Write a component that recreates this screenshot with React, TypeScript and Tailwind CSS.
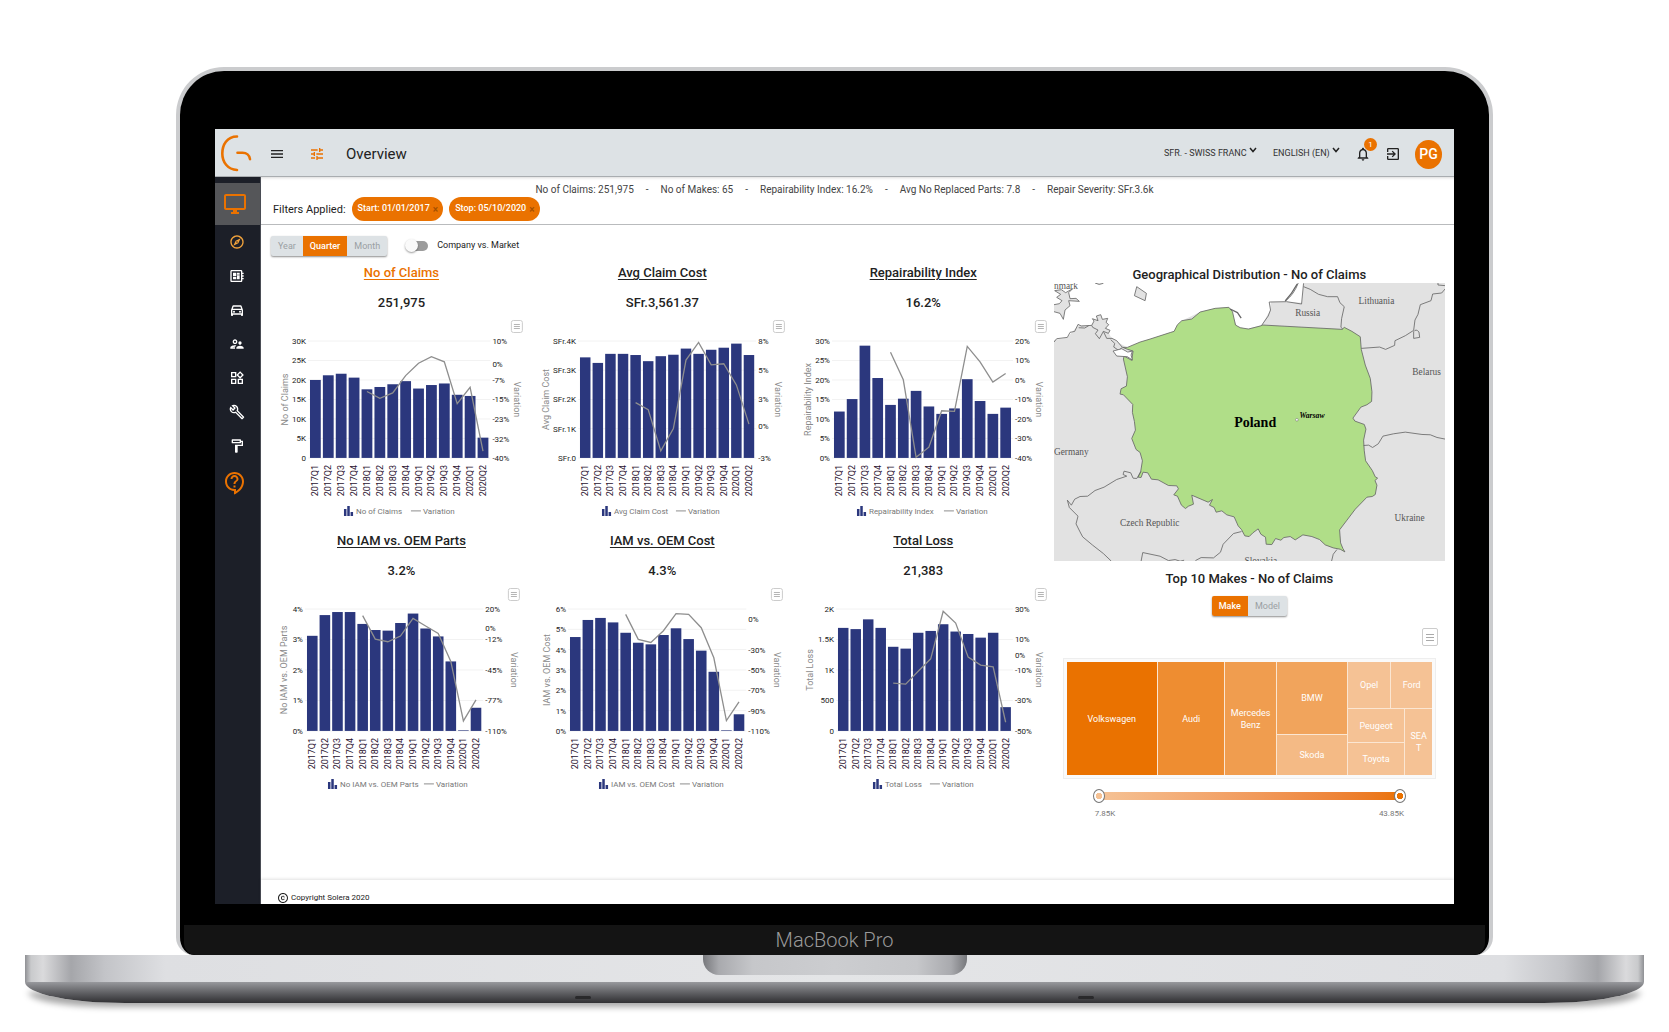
import { useState, type ReactNode } from "react";
import {
  MdCopyright,
  MdExitToApp,
  MdMenu,
  MdNotificationsNone,
  MdOutlineBuild,
  MdOutlineContactSupport,
  MdOutlineDesktopWindows,
  MdOutlineDeveloperBoard,
  MdOutlineDirectionsCar,
  MdOutlineExplore,
  MdOutlineFormatPaint,
  MdOutlineSupervisorAccount,
  MdOutlineWidgets,
  MdTune,
} from "react-icons/md";

type Tick = [label: string, value: number];

type Kpi = {
  title: string;
  value: string;
  active?: boolean;
  height: number;
  plotHeight: number;
  /** x of the first bar, distance between bars, bar width */
  start: number;
  pitch: number;
  barWidth: number;
  max: number;
  ticks: Tick[];
  bars: number[];
  range: [low: number, high: number];
  rightTicks: Tick[];
  variation: number[];
  axisX: [left: number, right: number];
  menuX: number;
  legendX: number;
  legendLineX: number;
};

const QUARTERS = [
  "2017Q1", "2017Q2", "2017Q3", "2017Q4",
  "2018Q1", "2018Q2", "2018Q3", "2018Q4",
  "2019Q1", "2019Q2", "2019Q3", "2019Q4",
  "2020Q1", "2020Q2",
];

const KPIS: Kpi[] = [
  {
    title: "No of Claims",
    value: "251,975",
    active: true,
    height: 209,
    plotHeight: 117,
    start: 39,
    pitch: 12.9,
    barWidth: 10.8,
    max: 30,
    ticks: [["30K", 30], ["25K", 25], ["20K", 20], ["15K", 15], ["10K", 10], ["5K", 5], ["0", 0]],
    bars: [20, 21.2, 21.6, 20.6, 17.6, 18.2, 18.9, 19.7, 17.8, 18.7, 19.1, 16.2, 15.9, 5.2],
    range: [-40, 10],
    rightTicks: [["10%", 10], ["0%", 0.3], ["-7%", -6.7], ["-15%", -15], ["-23%", -23.3], ["-32%", -31.7], ["-40%", -40]],
    variation: [-11.6, -14.5, -12.2, -4.8, 0.5, 3.3, 1.1, -16.8, -9.8, -37.1],
    axisX: [14, 246],
    menuX: 240,
    legendX: 73,
    legendLineX: 140,
  },
  {
    title: "Avg Claim Cost",
    value: "SFr.3,561.37",
    height: 209,
    plotHeight: 117,
    start: 48,
    pitch: 12.6,
    barWidth: 10.5,
    max: 4,
    ticks: [["SFr.4K", 4], ["SFr.3K", 3], ["SFr.2K", 2], ["SFr.1K", 1], ["SFr.0", 0]],
    bars: [3.44, 3.25, 3.56, 3.56, 3.52, 3.31, 3.48, 3.53, 3.74, 3.56, 3.7, 3.77, 3.91, 3.52],
    range: [-3, 8],
    rightTicks: [["8%", 8], ["5%", 5.3], ["3%", 2.5], ["0%", 0], ["-3%", -3]],
    variation: [2.2, 1.54, -2.34, -0.23, 6.2, 7.87, 5.76, 5.86, 3.87, 0.18],
    axisX: [14, 246],
    menuX: 241,
    legendX: 70,
    legendLineX: 144,
  },
  {
    title: "Repairability Index",
    value: "16.2%",
    height: 209,
    plotHeight: 117,
    start: 41,
    pitch: 12.8,
    barWidth: 10.7,
    max: 30,
    ticks: [["30%", 30], ["25%", 25], ["20%", 20], ["15%", 15], ["10%", 10], ["5%", 5], ["0%", 0]],
    bars: [11.9, 15.1, 28.8, 20.5, 13.6, 15.2, 17.2, 13.2, 11.3, 12.7, 20.2, 14.6, 11.3, 12.9],
    range: [-40, 20],
    rightTicks: [["20%", 20], ["10%", 10], ["0%", 0], ["-10%", -10], ["-20%", -20], ["-30%", -30], ["-40%", -40]],
    variation: [14.2, 0.1, -39.7, -34.5, -15.8, -16.1, 17.2, 9.3, -1.1, 3.3],
    axisX: [15, 246],
    menuX: 242,
    legendX: 64,
    legendLineX: 151,
  },
  {
    title: "No IAM vs. OEM Parts",
    value: "3.2%",
    height: 213,
    plotHeight: 122,
    start: 36,
    pitch: 12.6,
    barWidth: 10.6,
    max: 4,
    ticks: [["4%", 4], ["3%", 3], ["2%", 2], ["1%", 1], ["0%", 0]],
    bars: [3.12, 3.8, 3.9, 3.9, 3.51, 3.31, 3.29, 3.54, 3.85, 3.36, 3.1, 2.28, 0.02, 0.76],
    range: [-110, 20],
    rightTicks: [["20%", 20], ["0%", 0], ["-12%", -12], ["-45%", -45], ["-77%", -77], ["-110%", -110]],
    variation: [12.9, -12.1, -14.9, -8.9, 10, 1.8, -6, -35.9, -99.3, -76.9],
    axisX: [13, 243],
    menuX: 237,
    legendX: 57,
    legendLineX: 153,
  },
  {
    title: "IAM vs. OEM Cost",
    value: "4.3%",
    height: 213,
    plotHeight: 122,
    start: 38,
    pitch: 12.6,
    barWidth: 10.6,
    max: 6,
    ticks: [["6%", 6], ["5%", 5], ["4%", 4], ["3%", 3], ["2%", 2], ["1%", 1], ["0%", 0]],
    bars: [4.62, 5.46, 5.56, 5.34, 4.83, 4.34, 4.26, 4.72, 5.05, 4.52, 3.95, 2.91, 0.03, 0.82],
    range: [-110, 10],
    rightTicks: [["0%", 0], ["-30%", -30], ["-50%", -50], ["-70%", -70], ["-90%", -90], ["-110%", -110]],
    variation: [4.7, -19.9, -22.9, -11.4, 5.4, 4.7, -8.4, -38, -99.8, -81.4],
    axisX: [15, 245],
    menuX: 239,
    legendX: 67,
    legendLineX: 148,
  },
  {
    title: "Total Loss",
    value: "21,383",
    height: 213,
    plotHeight: 122,
    start: 45,
    pitch: 12.5,
    barWidth: 10.5,
    max: 2,
    ticks: [["2K", 2], ["1.5K", 1.5], ["1K", 1], ["500", 0.5], ["0", 0]],
    bars: [1.69, 1.67, 1.83, 1.69, 1.38, 1.35, 1.61, 1.64, 1.75, 1.63, 1.59, 1.53, 1.61, 0.39],
    range: [-50, 30],
    rightTicks: [["30%", 30], ["10%", 10], ["0%", 0], ["-10%", -10], ["-30%", -30], ["-50%", -50]],
    variation: [-18.7, -19.3, -10.8, -2.7, 28.5, 20.8, -1.6, -6.8, -7.9, -44.3],
    axisX: [17, 246],
    menuX: 242,
    legendX: 80,
    legendLineX: 137,
  },
];

const STATS = [
  "No of Claims: 251,975",
  "No of Makes: 65",
  "Repairability Index: 16.2%",
  "Avg No Replaced Parts: 7.8",
  "Repair Severity: SFr.3.6k",
];

const NAV = [
  { label: "Explore", Icon: MdOutlineExplore, className: "text-[#f2a33c]" },
  { label: "Dashboard", Icon: MdOutlineDeveloperBoard, className: "text-white" },
  { label: "Vehicles", Icon: MdOutlineDirectionsCar, className: "text-white" },
  { label: "Partners", Icon: MdOutlineSupervisorAccount, className: "text-white" },
  { label: "Parts", Icon: MdOutlineWidgets, className: "text-white" },
  { label: "Repair", Icon: MdOutlineBuild, className: "text-white" },
  { label: "Paint", Icon: MdOutlineFormatPaint, className: "text-white" },
];

export default function App() {
  return (
    <div className="min-h-screen overflow-hidden bg-white pt-[67px] text-[#222] [font-family:Roboto,sans-serif]">
      {/* Lid */}
      <div className="px-44">
        <div className="rounded-t-[48px] rounded-b-[18px] border-x-4 border-t-4 border-[#cbccce] bg-black">
          <div className="px-[35px] pt-[58px] pb-[21px]">
            <Screen />
          </div>
          <div className="mx-1 flex h-[30px] items-center justify-center rounded-b-[12px] bg-[#141414] text-[20px] font-light text-[#9a9a9a]">
            MacBook Pro
          </div>
        </div>
      </div>
      <LaptopBase />
    </div>
  );
}

function LaptopBase() {
  return (
    <div className="px-[25px]">
      <div className="flex h-[27px] justify-center bg-[linear-gradient(90deg,#8f9094_0,#c9cacc_6px,#dadadc_18px,#a5a6aa_46px,#c3c4c8_80px,#dedfe2_140px,#e4e5e7_50%,#dedfe2_calc(100%-140px),#c3c4c8_calc(100%-80px),#a5a6aa_calc(100%-46px),#dadadc_calc(100%-18px),#c9cacc_calc(100%-6px),#8f9094_100%)]">
        <div className="h-[20px] w-[264px] rounded-b-[16px] bg-[linear-gradient(90deg,#77787c_0,#a9aaae_16px,#c6c7ca_50px,#cccdd0_50%,#c6c7ca_calc(100%-50px),#a9aaae_calc(100%-16px),#77787c_100%)]" />
      </div>
      <div className="flex h-[21px] items-end justify-between rounded-b-[100px_21px] bg-linear-to-b from-[#98999d] to-[#303033] px-[34%] pb-1 shadow-[0_7px_6px_-3px_rgba(0,0,0,0.35)]">
        <div className="h-[3px] w-4 rounded-full bg-[#29292b]" />
        <div className="h-[3px] w-4 rounded-full bg-[#29292b]" />
      </div>
    </div>
  );
}

function Screen() {
  return (
    <div className="bg-white">
      <TopBar />
      <div className="flex">
        <SideNav />
        <main className="flex min-w-0 flex-1 flex-col">
          <FilterBar />
          <div className="flex-1 pt-[11px] pr-[9px] pl-[10px]">
            <Controls />
            <div className="grid grid-cols-[2fr_1fr] pt-[7px]">
              <div className="grid min-w-0 grid-cols-3 content-start gap-y-[6px]">
                {KPIS.map((kpi) => (
                  <KpiCard key={kpi.title} kpi={kpi} />
                ))}
              </div>
              <div className="min-w-0 pt-1">
                <h2 className="text-center text-[13px] leading-4 font-medium">
                  Geographical Distribution - No of Claims
                </h2>
                <PolandMap />
                <TopMakes />
              </div>
            </div>
          </div>
          <footer className="mt-[60px] flex h-[24px] items-center gap-[2px] pt-3 pl-4 text-[8px] shadow-[0_-1px_3px_rgba(0,0,0,0.12)]">
            <MdCopyright className="size-3" />
            Copyright Solera 2020
          </footer>
        </main>
      </div>
    </div>
  );
}

function TopBar() {
  return (
    <header className="flex h-12 items-center border-b border-[#a9adb0] bg-[#dde2e5] pt-[3px] pr-3 text-[#222]">
      <svg viewBox="0 0 45 44" className="h-11 w-[45px]" fill="none" stroke="#ea7200" strokeWidth="2.6" strokeLinecap="round">
        <path d="M22 4.500C12 4.500 7.300 13 7.300 21.500S12.500 37.500 22 38" />
        <path d="M22.500 20.800h5c4 0 7 2.500 7.500 6.400" />
      </svg>
      <button type="button" aria-label="Menu" className="ml-[9px]">
        <MdMenu className="size-4" />
      </button>
      <button type="button" aria-label="Filters" className="ml-6 text-[#ea7200]">
        <MdTune className="size-4" />
      </button>
      <h1 className="ml-[21px] text-[15px]">Overview</h1>
      <div className="ml-auto flex items-center">
        <HeaderSelect label="Currency" value="SFR. - SWISS FRANC" />
        <div className="w-4" />
        <HeaderSelect label="Language" value="ENGLISH (EN)" />
        <button type="button" aria-label="Notifications" className="relative ml-[15px]">
          <MdNotificationsNone className="size-4" />
          <span className="absolute -top-2 left-[9px] flex size-[13px] items-center justify-center rounded-full bg-[#ea7200] text-[8px] text-white">
            1
          </span>
        </button>
        <button type="button" aria-label="Sign out" className="ml-[14px]">
          <MdExitToApp className="size-4" />
        </button>
        <button
          type="button"
          className="ml-[14px] flex h-[29px] w-[27px] items-center justify-center rounded-[50%] bg-[#ea7200] text-[14px] font-medium text-white"
        >
          PG
        </button>
      </div>
    </header>
  );
}

function HeaderSelect({ label, value }: { label: string; value: string }) {
  return (
    <label className="flex items-center gap-[2px]">
      <select aria-label={label} defaultValue={value} className="appearance-none bg-transparent text-[9px] text-[#333] outline-none">
        <option value={value}>{value}</option>
      </select>
      <svg viewBox="0 0 8 8" className="mb-2 size-2" fill="none" stroke="#222" strokeWidth="1.500">
        <path d="M1 2l3 3.500L7 2" />
      </svg>
    </label>
  );
}

function SideNav() {
  return (
    <nav className="flex w-[46px] flex-col border-r border-[#4a4d55] bg-[#1c1f28] pt-[6px]">
      <a href="#overview" aria-label="Overview" className="flex h-[42px] items-center justify-center bg-[#555659] pr-[5px] text-[#ea7200]">
        <MdOutlineDesktopWindows className="size-6" />
      </a>
      {NAV.map(({ label, Icon, className }) => (
        <a key={label} href="#nav" aria-label={label} className={`flex h-[34px] items-center justify-center pr-[2px] ${className}`}>
          <Icon className="size-4" />
        </a>
      ))}
      <a href="#help" aria-label="Help" className="flex h-10 items-center justify-center pr-[5px] text-[#ea7200]">
        <MdOutlineContactSupport className="size-6" />
      </a>
    </nav>
  );
}

function FilterBar() {
  return (
    <div className="border-b border-[#b9bbbd] pb-[3px] shadow-[inset_0_3px_3px_-2px_rgba(0,0,0,0.15)]">
      <div className="flex h-5 items-center justify-center gap-3 pt-1 pr-[26px] text-[10px] text-[#444]">
        {STATS.map((stat, i) => (
          <span key={stat} className="flex gap-3">
            {i > 0 && <span>-</span>}
            {stat}
          </span>
        ))}
      </div>
      <div className="flex h-6 items-center gap-[6px] pl-3 text-[11px]">
        <span className="pt-[2px]">Filters Applied:</span>
        <Chip>Start: 01/01/2017</Chip>
        <Chip>Stop: 05/10/2020</Chip>
      </div>
    </div>
  );
}

function Chip({ children }: { children: ReactNode }) {
  return (
    <span className="flex h-6 items-center gap-[3px] rounded-full bg-[#ea7200] pr-[5px] pl-[6px] text-[9px] font-medium text-white">
      {children}
      <button type="button" aria-label="Remove filter" className="text-[10px] text-[#a34f00]">
        ×
      </button>
    </span>
  );
}

function Segmented({ options, initial }: { options: string[]; initial: string }) {
  const [value, setValue] = useState(initial);
  return (
    <div className="flex h-5 overflow-hidden rounded-[2px] bg-[#dde2e5] text-[9px] shadow-[0_1px_2px_rgba(0,0,0,0.45)]">
      {options.map((option) => (
        <button
          key={option}
          type="button"
          onClick={() => setValue(option)}
          className={`px-[7px] pt-px ${value === option ? "bg-[#ea7200] font-medium text-white" : "text-[#9a9fa3]"}`}
        >
          {option}
        </button>
      ))}
    </div>
  );
}

function Controls() {
  return (
    <div className="flex h-5 items-center">
      <Segmented options={["Year", "Quarter", "Month"]} initial="Quarter" />
      <label className="ml-[22px] flex items-center gap-[9px] text-[9px]">
        <input
          type="checkbox"
          className="relative h-[10px] w-[19px] appearance-none rounded-full bg-[#9c9c9c] before:absolute before:-top-[2px] before:-left-1 before:size-[13px] before:rounded-full before:bg-[#fafafa] before:shadow-[0_1px_2px_rgba(0,0,0,0.4)] checked:bg-[#ea7200] checked:before:left-2"
        />
        Company vs. Market
      </label>
    </div>
  );
}

function KpiCard({ kpi }: { kpi: Kpi }) {
  return (
    <section className="min-w-0 text-center">
      <h2 className="pt-[2px] text-[13px] leading-4 font-medium">
        <a href="#kpi" className={`underline underline-offset-2 ${kpi.active ? "text-[#ea7200]" : ""}`}>
          {kpi.title}
        </a>
      </h2>
      <div className="pt-[14px] pb-[5px] text-[13px] leading-4 font-medium">{kpi.value}</div>
      <TrendChart kpi={kpi} />
    </section>
  );
}

function TrendChart({ kpi }: { kpi: Kpi }) {
  const top = 25;
  const base = top + kpi.plotHeight;
  const right = kpi.start + 13 * kpi.pitch + kpi.barWidth;
  const mid = top + kpi.plotHeight / 2;
  const [low, high] = kpi.range;
  const leftY = (v: number) => base - (v / kpi.max) * kpi.plotHeight;
  const rightY = (v: number) => top + ((high - v) / (high - low)) * kpi.plotHeight;
  const barX = (i: number) => kpi.start + i * kpi.pitch;
  const line = kpi.variation
    .map((v, i) => `${barX(i + 4) + kpi.barWidth / 2},${rightY(v)}`)
    .join(" ");
  const legendY = base + 53;

  return (
    <svg viewBox={`0 0 261 ${kpi.height}`} className="block w-full text-[8px]">
      {/* Menu */}
      <rect x={kpi.menuX + 0.5} y="4.500" width="11" height="12" rx="2" fill="#fff" stroke="#ccc" />
      <path d={`M${kpi.menuX + 3} 8.500h6m-6 2h6m-6 2h6`} stroke="#b5b5b5" />

      {kpi.ticks.map(([label, v]) => (
        <g key={label}>
          <path d={`M${kpi.start - 2} ${leftY(v)}H${right + 2}`} stroke="#f2f2f2" />
          <text x={kpi.start - 4} y={leftY(v) + 3} textAnchor="end" fill="#222">
            {label}
          </text>
        </g>
      ))}
      {kpi.bars.map((v, i) => (
        <rect
          key={QUARTERS[i]}
          x={barX(i)}
          y={leftY(v)}
          width={kpi.barWidth}
          height={base - leftY(v)}
          fill="#2b377d"
        />
      ))}
      {kpi.rightTicks.map(([label, v]) => (
        <text key={label} x={right + 4} y={rightY(v) + 3} fill="#222">
          {label}
        </text>
      ))}
      {QUARTERS.map((q, i) => (
        <text
          key={q}
          transform={`translate(${barX(i) + kpi.barWidth / 2 + 3} ${base + 7}) rotate(-90)`}
          textAnchor="end"
          fill="#2a1230"
          className="text-[9px]"
        >
          {q}
        </text>
      ))}
      <polyline points={line} fill="none" stroke="#8e8e8e" strokeWidth="1.300" />

      <text
        transform={`translate(${kpi.axisX[0] + 3} ${mid}) rotate(-90)`}
        textAnchor="middle"
        fill="#8a8a8a"
        className="text-[9px]"
      >
        {kpi.title}
      </text>
      <text
        transform={`translate(${kpi.axisX[1] - 3} ${mid}) rotate(90)`}
        textAnchor="middle"
        fill="#8a8a8a"
        className="text-[9px]"
      >
        Variation
      </text>

      {/* Legend */}
      <path
        d={`M${kpi.legendX} ${legendY + 5}v-7h2.500v7zM${kpi.legendX + 3.3} ${legendY + 5}v-10h2.500v10zM${kpi.legendX + 6.6} ${legendY + 5}v-4h2.500v4z`}
        fill="#2b377d"
      />
      <text x={kpi.legendX + 12} y={legendY + 3} fill="#777">
        {kpi.title}
      </text>
      <path d={`M${kpi.legendLineX} ${legendY}h10`} stroke="#8e8e8e" />
      <text x={kpi.legendLineX + 12} y={legendY + 3} fill="#777">
        Variation
      </text>
    </svg>
  );
}

function PolandMap() {
  return (
    <svg
      viewBox="42 69 1173 834"
      className="block w-full [font-family:'Liberation_Serif',serif]"
      fill="none"
      stroke="#666"
      strokeWidth="2.500"
      strokeLinejoin="round"
    >
      <rect x="42" y="69" width="1173" height="834" fill="#e2e2e2" stroke="none" />
      {/* Baltic sea */}
      <path
        d="M42 69H790L785 128L740 125L692 125L690 150L665 195L620 207L590 198L570 143L525 145L480 156L425 182L400 215L330 237L262 262L230 245L212 230L200 205L180 165L158 195L115 195L82 232L42 240Z"
        fill="#fff"
        stroke="none"
      />
      <path d="M42 246L50 236L82 232L90 217L104 214L114 193L124 198L155 196M116 203L134 204L146 197" />
      <path d="M155 196L162 183L157 176L174 182L169 168L182 164L187 178L203 175L198 187L206 194L196 205L210 211L205 220L190 214L178 236L166 221L174 210L158 202Z" fill="#e2e2e2" />
      <path d="M190 214L200 235L216 235L230 242L247 262L236 271L221 261L224 250L212 239" fill="#e2e2e2" />
      <path d="M42 155L60 160L70 178L75 150L90 137L86 122L118 124L108 115L90 116L86 98L98 86L77 98L64 89L44 92L62 103L50 112L66 122L58 131L42 134" fill="#e2e2e2" />
      <path d="M290 80L319 100L315 122L283 107ZM165 69Q177 77 190 70" fill="#e2e2e2" />
      {/* Poland */}
      <path
        d="M248 262L262 262L300 246L330 237L392 217L402 214L412 194L425 182L455 177L480 156L525 145L566 142L577 155L586 195L600 203L625 207L660 198L668 195L906 208L912 202L935 214L960 230L963 268L975 315L990 355L995 395L994 424L980 434L962 441L938 474L944 483L972 493L977 507L970 540L972 572L976 602L996 631L1005 650L1012 654L1004 661L1010 675L1005 703L996 709L980 711L945 747L920 780L898 809L901 848L908 865L914 875L900 867L879 863L855 854L838 838L815 829L788 824L765 839L750 829L731 832L722 840L706 835L695 853L678 852L676 831L662 822L654 806L638 818L627 829L614 827L604 808L594 797L582 770L560 764L545 752L528 756L522 742L508 735L517 718L504 726L455 705L460 732L445 738L436 745L424 735L412 708L401 704L415 686L410 677L385 676L354 659L334 657L323 638L309 636L303 652L294 651L302 633L307 602L300 577L288 568L275 535L286 510L283 484L277 457L278 433L250 404L240 402L243 386L259 378L262 350L250 297L252 288L275 301L279 273L263 268Z"
        fill="#b0de88"
      />
      <path d="M219 273L245 266L263 276L277 273L273 285L277 300L262 290L230 288Z" fill="#fff" />
      <path d="M570 147L592 158L603 174" strokeWidth="4" />
      {/* Kaliningrad and the Curonian spit */}
      <path d="M665 195L684 168L691 150L687 126L739 125L784 132L790 70M737 122Q762 102 774 69M790 80L810 88L835 103L862 110H892L899 128L912 140L904 176L902 202L908 207" />
      <path d="M735 123Q756 100 771 72" strokeWidth="4" />
      <path d="M963 265L1018 261L1036 268L1063 256L1064 242L1095 227L1120 211L1124 180L1133 163L1140 134L1172 122L1177 102L1204 99L1215 86M1120 215Q1127 205 1136 216L1138 232L1120 235ZM1193 69V75L1215 77" />
      <path d="M970 556L985 555L997 562L1014 551L1028 528L1060 521L1095 516L1145 523L1170 524L1190 532L1215 537" />
      <path d="M890 868L879 882L874 903" />
      {/* Czech and Slovak borders */}
      <path d="M303 634L290 655L279 654L272 638L252 633L249 643L260 648L230 658L192 681L165 691L143 708L120 709L104 717L94 735L82 720L88 742L114 768L108 791L120 815L128 830L158 855L190 880L214 903" />
      <path d="M604 814L580 820L549 852L541 876L520 893L483 892L466 901M303 903L308 877L360 888L385 901L405 898L420 903L432 900" />

      <g fill="#555" stroke="none" className="text-[28px]">
        <text x="42" y="87">nmark</text>
        <text x="765" y="168">Russia</text>
        <text x="955" y="133">Lithuania</text>
        <text x="1116" y="346">Belarus</text>
        <text x="42" y="584">Germany</text>
        <text x="240" y="798">Czech Republic</text>
        <text x="1063" y="782">Ukraine</text>
        <text x="613" y="910">Slovakia</text>
      </g>
      <text x="582" y="501" fill="#000" stroke="none" className="text-[42px] font-bold">
        Poland
      </text>
      <text x="778" y="474" fill="#000" stroke="none" className="text-[23px] font-bold italic">
        Warsaw
      </text>
      <circle cx="770" cy="479" r="4" fill="#fff" strokeWidth="1.500" />
    </svg>
  );
}

function Tile({ name, className }: { name: string; className: string }) {
  return (
    <div className={`flex min-h-0 min-w-0 items-center justify-center text-center leading-3 ${className}`}>
      <span className="min-w-0 wrap-break-word">{name}</span>
    </div>
  );
}

function TopMakes() {
  return (
    <section>
      <h2 className="pt-[10px] text-center text-[13px] leading-4 font-medium">Top 10 Makes - No of Claims</h2>
      <div className="flex justify-center pt-[9px]">
        <Segmented options={["Make", "Model"]} initial="Make" />
      </div>
      <div className="flex justify-end pt-3 pr-[7px]">
        <button type="button" aria-label="Chart menu" className="flex h-[18px] w-4 items-center justify-center rounded-[2px] border border-[#ccc]">
          <svg viewBox="0 0 8 8" className="size-2" stroke="#aaa">
            <path d="M0 1.500h8M0 4.500h8M0 7.500h8" />
          </svg>
        </button>
      </div>

      <div className="mt-3 mr-[9px] ml-[9px] border border-[#eee] bg-[#fafafa] p-[3px] text-[9px] text-white">
        <div className="grid h-[113px] grid-cols-[274fr_202fr_153fr_213fr_255fr] gap-px bg-[#fbe6d2]">
          <Tile name="Volkswagen" className="bg-[#ea7200]" />
          <Tile name="Audi" className="bg-[#ee8d31]" />
          <Tile name="Mercedes Benz" className="bg-[#f09d4f]" />
          <div className="grid min-w-0 grid-rows-[217fr_120fr] gap-px">
            <Tile name="BMW" className="bg-[#f1a45c]" />
            <Tile name="Skoda" className="bg-[#f4ba85]" />
          </div>
          <div className="grid min-w-0 grid-rows-[138fr_199fr] gap-px">
            <div className="grid grid-cols-[130fr_125fr] gap-px">
              <Tile name="Opel" className="bg-[#f5c295]" />
              <Tile name="Ford" className="bg-[#f5c295]" />
            </div>
            <div className="grid grid-cols-[172fr_82fr] gap-px">
              <div className="grid grid-rows-[101fr_98fr] gap-px">
                <Tile name="Peugeot" className="bg-[#f5c295]" />
                <Tile name="Toyota" className="bg-[#f5c295]" />
              </div>
              <Tile name="SEAT" className="bg-[#f5c295] px-1" />
            </div>
          </div>
        </div>
      </div>

      <div className="px-[39px] pt-[9px] text-[8px] text-[#777]">
        <div className="relative flex h-4 items-center px-[6px]">
          <div className="h-2 flex-1 bg-linear-to-r from-[#f5c295] to-[#ea7200]" />
          <input
            type="range"
            aria-label="Minimum claims"
            min="7.85"
            max="43.85"
            step="0.01"
            defaultValue="7.85"
            className="pointer-events-none absolute inset-0 w-full appearance-none bg-transparent [&::-webkit-slider-thumb]:pointer-events-auto [&::-webkit-slider-thumb]:h-[14px] [&::-webkit-slider-thumb]:w-3 [&::-webkit-slider-thumb]:appearance-none [&::-webkit-slider-thumb]:rounded-[50%] [&::-webkit-slider-thumb]:border [&::-webkit-slider-thumb]:border-[#777] [&::-webkit-slider-thumb]:bg-[radial-gradient(circle,#f5c295_3px,#fff_3px)]"
          />
          <input
            type="range"
            aria-label="Maximum claims"
            min="7.85"
            max="43.85"
            step="0.01"
            defaultValue="43.85"
            className="pointer-events-none absolute inset-0 w-full appearance-none bg-transparent [&::-webkit-slider-thumb]:pointer-events-auto [&::-webkit-slider-thumb]:h-[14px] [&::-webkit-slider-thumb]:w-3 [&::-webkit-slider-thumb]:appearance-none [&::-webkit-slider-thumb]:rounded-[50%] [&::-webkit-slider-thumb]:border [&::-webkit-slider-thumb]:border-[#777] [&::-webkit-slider-thumb]:bg-[radial-gradient(circle,#ea7200_3px,#fff_3px)]"
          />
        </div>
        <div className="flex justify-between px-[2px] pt-1">
          <span>7.85K</span>
          <span>43.85K</span>
        </div>
      </div>
    </section>
  );
}
